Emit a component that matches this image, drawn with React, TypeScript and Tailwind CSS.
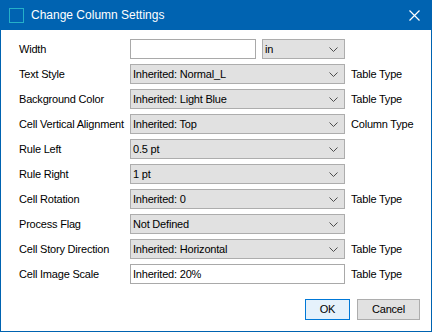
import React from 'react'

const font = { fontFamily: '"Liberation Sans", Arial, sans-serif' }

function Chevron() {
  return (
    <svg width="9" height="5" viewBox="0 0 9 5" className="shrink-0">
      <path d="M0.5 0.5 L4.5 4.5 L8.5 0.5" fill="none" stroke="#4d4d4d" strokeWidth="1" />
    </svg>
  )
}

function Select({ value, className = 'w-[215px]' }: { value: string; className?: string }) {
  return (
    <div
      className={`${className} h-[20px] flex items-center justify-between border border-[#adadad] bg-[#e1e1e1] pl-[2px] pr-[6px] text-black`}
    >
      <span className="whitespace-nowrap leading-[16px]">{value}</span>
      <Chevron />
    </div>
  )
}

function TextInput({ value = '', className = 'w-[215px]' }: { value?: string; className?: string }) {
  return (
    <div className={`${className} h-[20px] flex items-center border border-[#a9a9a9] bg-white pl-[2px] text-black`}>
      <span className="whitespace-nowrap leading-[16px]">{value}</span>
    </div>
  )
}

type Row = { label: string; value: string; kind: 'select' | 'input'; note?: string }

const rows: Row[] = [
  { label: 'Text Style', value: 'Inherited: Normal_L', kind: 'select', note: 'Table Type' },
  { label: 'Background Color', value: 'Inherited: Light Blue', kind: 'select', note: 'Table Type' },
  { label: 'Cell Vertical Alignment', value: 'Inherited: Top', kind: 'select', note: 'Column Type' },
  { label: 'Rule Left', value: '0.5 pt', kind: 'select' },
  { label: 'Rule Right', value: '1 pt', kind: 'select' },
  { label: 'Cell Rotation', value: 'Inherited: 0', kind: 'select', note: 'Table Type' },
  { label: 'Process Flag', value: 'Not Defined', kind: 'select' },
  { label: 'Cell Story Direction', value: 'Inherited: Horizontal', kind: 'select', note: 'Table Type' },
  { label: 'Cell Image Scale', value: 'Inherited: 20%', kind: 'input', note: 'Table Type' },
]

export default function App() {
  return (
    <div
      className="w-[432px] h-[332px] flex flex-col border-x border-b border-[#0063b1] bg-white text-[11px] tracking-[-0.2px] text-black"
      style={font}
    >
      {/* Title bar */}
      <div className="h-[30px] shrink-0 flex items-center bg-[#0063b1] pl-[9px] pr-[12px] -mx-px tracking-normal">
        <div className="w-[15px] h-[15px] border-[1.5px] border-[#25b0c8]" />
        <span className="ml-[7px] text-[12px] text-white">Change Column Settings</span>
        <svg width="11" height="11" viewBox="0 0 11 11" className="ml-auto">
          <path d="M0.5 0.5 L10.5 10.5 M10.5 0.5 L0.5 10.5" stroke="white" strokeWidth="1.2" />
        </svg>
      </div>

      {/* Body */}
      <div className="flex flex-col gap-[5px] pt-[9px] pl-[18px]">
        <div className="flex items-center">
          <span className="w-[111px]">Width</span>
          <TextInput className="w-[126px]" />
          <Select value="in" className="ml-[6px] w-[83px]" />
        </div>
        {rows.map((r) => (
          <div key={r.label} className="flex items-center">
            <span className="w-[111px] whitespace-nowrap">{r.label}</span>
            {r.kind === 'select' ? <Select value={r.value} /> : <TextInput value={r.value} />}
            {r.note && <span className="ml-[6px] whitespace-nowrap">{r.note}</span>}
          </div>
        ))}
      </div>

      {/* Buttons */}
      <div className="flex justify-end gap-[7px] pt-[15px] pr-[11px]">
        <button className="w-[45px] h-[21px] border border-[#0078d7] bg-[#e5f1fb] leading-none">OK</button>
        <button className="w-[63px] h-[21px] border border-[#adadad] bg-[#e1e1e1] leading-none">Cancel</button>
      </div>
    </div>
  )
}
